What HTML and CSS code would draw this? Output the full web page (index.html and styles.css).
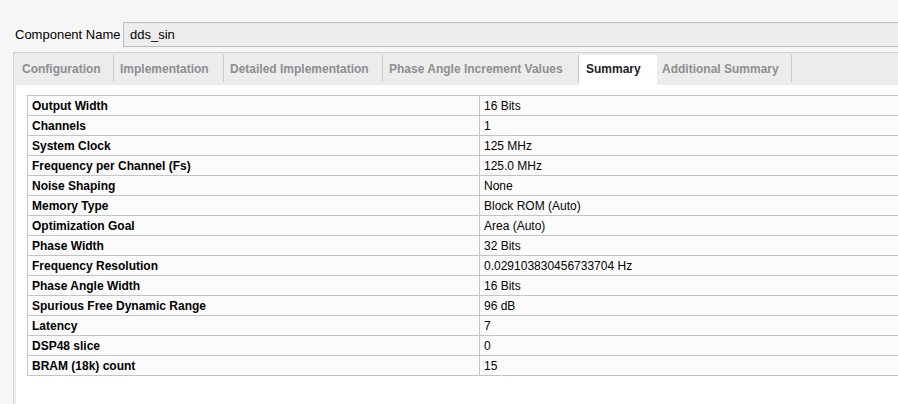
FILE: index.html
```html
<!DOCTYPE html>
<html lang="en">
  <head>
    <meta charset="UTF-8" />
    <title>dds_sin - Summary</title>
    <link rel="stylesheet" href="styles.css">
  </head>
  <body>
    <div class="name-row">
      <label for="compName">Component Name</label>
      <input type="text" id="compName" class="name-input" value="dds_sin" />
    </div>

    <!-- 탭 패널 -->
    <div class="panel">
      <div class="tabs">
        <div class="tab tab-config">Configuration</div>
        <div class="tab tab-impl">Implementation</div>
        <div class="tab tab-detail">Detailed Implementation</div>
        <div class="tab tab-phase">Phase Angle Increment Values</div>
        <div class="tab tab-summary active">Summary</div>
        <div class="tab tab-extra">Additional Summary</div>
      </div>

      <div class="tab-content">
        <table class="summary">
          <tr><td class="key">Output Width</td><td>16 Bits</td></tr>
          <tr><td class="key">Channels</td><td>1</td></tr>
          <tr><td class="key">System Clock</td><td>125 MHz</td></tr>
          <tr><td class="key">Frequency per Channel (Fs)</td><td>125.0 MHz</td></tr>
          <tr><td class="key">Noise Shaping</td><td>None</td></tr>
          <tr><td class="key">Memory Type</td><td>Block ROM (Auto)</td></tr>
          <tr><td class="key">Optimization Goal</td><td>Area (Auto)</td></tr>
          <tr><td class="key">Phase Width</td><td>32 Bits</td></tr>
          <tr><td class="key">Frequency Resolution</td><td>0.029103830456733704 Hz</td></tr>
          <tr><td class="key">Phase Angle Width</td><td>16 Bits</td></tr>
          <tr><td class="key">Spurious Free Dynamic Range</td><td>96 dB</td></tr>
          <tr><td class="key">Latency</td><td>7</td></tr>
          <tr><td class="key">DSP48 slice</td><td>0</td></tr>
          <tr><td class="key">BRAM (18k) count</td><td>15</td></tr>
        </table>
      </div>
    </div>
  </body>
</html>
```

FILE: styles.css
```css
html,
body {
  height: 100%;
}

body {
  margin: 0;
  overflow: hidden;
  display: flex;
  flex-direction: column;
  font-family: 'Liberation Sans', Arial, sans-serif;
  background-color: #f6f6f6;
  color: #000;
}

/* 컴포넌트 이름 입력 */
.name-row {
  display: flex;
  align-items: center;
  padding: 22px 0 0 15px;
  font-size: 13px;
}

.name-row label {
  width: 108px;
}

.name-input {
  flex: 1;
  height: 25px;
  box-sizing: border-box;
  margin: 0 -4px 0 0;
  padding: 0 6px;
  border: 1px solid #bcbcbc;
  background-color: #ededed;
  font-family: inherit;
  font-size: 13px;
  color: #000;
  outline: none;
}

/* 탭 패널 */
.panel {
  flex: 1;
  display: flex;
  flex-direction: column;
  margin: 5px -4px 0 13px;
  padding: 2px 0 0 2px;
  border: 1px solid #d2d2d2;
  border-bottom: none;
  background-color: #ececec;
}

.tabs {
  display: flex;
  height: 30px;
}

.tab {
  display: flex;
  align-items: center;
  box-sizing: border-box;
  height: 27px;
  padding: 0 0 0 6px;
  border-right: 1px solid #c6c6c6;
  font-size: 12px;
  font-weight: bold;
  color: #8e8e8e;
  white-space: nowrap;
  overflow: hidden;
}

.tab-config { width: 98px; }
.tab-impl { width: 110px; }
.tab-detail { width: 159px; }
.tab-phase { width: 196px; }
.tab-summary { width: 78px; }
.tab-extra { width: 135px; padding-left: 5px; }

.tab.active {
  height: 30px;
  align-items: flex-start;
  padding: 7px 0 0 7px;
  border-right: none;
  background-color: #fff;
  color: #1c1c24;
}

.tab-content {
  flex: 1;
  background-color: #fff;
  padding: 10px 0 0 11px;
}

/* 요약 테이블 */
.summary {
  width: 900px;
  border-collapse: collapse;
  background-color: #fcfcfc;
  font-size: 12px;
}

.summary td {
  height: 19px;
  padding: 0 4px;
  border: 1px solid #c4c4c4;
  white-space: nowrap;
}

.summary td.key {
  width: 443px;
  font-weight: bold;
}
```
